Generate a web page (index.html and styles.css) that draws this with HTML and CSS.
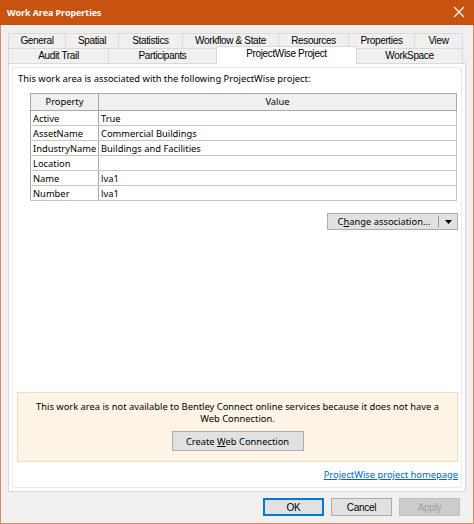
FILE: index.html
```html
<!DOCTYPE html>
<html>
<head>
<meta charset="utf-8">
<link rel="stylesheet" href="styles.css">
</head>
<body>
<div class="window">
  <div class="titlebar">
    <span class="title">Work Area Properties</span>
    <svg class="close" width="12" height="12" viewBox="0 0 12 12"><path d="M1 1L11 11M11 1L1 11" stroke="#fff" stroke-width="1.2" fill="none"/></svg>
  </div>
  <div class="body">
    <div class="tabs">
      <div class="tabrow row1">
        <div class="tab">General</div>
        <div class="tab">Spatial</div>
        <div class="tab">Statistics</div>
        <div class="tab">Workflow &amp; State</div>
        <div class="tab">Resources</div>
        <div class="tab">Properties</div>
        <div class="tab">View</div>
      </div>
      <div class="tabrow row2">
        <div class="tab">Audit Trail</div>
        <div class="tab">Participants</div>
        <div class="tab active">ProjectWise Project</div>
        <div class="tab">WorkSpace</div>
      </div>
    </div>
    <div class="panel">
      <div class="inner">
        <div class="intro">This work area is associated with the following ProjectWise project:</div>
        <table class="grid">
          <thead>
            <tr><th class="pcol">Property</th><th>Value</th></tr>
          </thead>
          <tbody>
            <tr><td>Active</td><td>True</td></tr>
            <tr><td>AssetName</td><td>Commercial Buildings</td></tr>
            <tr><td>IndustryName</td><td>Buildings and Facilities</td></tr>
            <tr><td>Location</td><td></td></tr>
            <tr><td>Name</td><td>lva1</td></tr>
            <tr><td>Number</td><td>lva1</td></tr>
          </tbody>
        </table>
        <div class="assoc-row">
          <div class="split">
            <span class="split-main">C<u>h</u>ange association...</span>
            <span class="split-sep"></span>
            <span class="split-arrow"><svg width="7" height="4" viewBox="0 0 7 4"><path d="M0 0H7L3.5 4Z" fill="#000"/></svg></span>
          </div>
        </div>
        <div class="spacer"></div>
        <div class="notice">
          <div class="notice-text">This work area is not available to Bentley Connect online services because it does not have a Web Connection.</div>
          <div class="btn create"><span>Create <u>W</u>eb Connection</span></div>
        </div>
        <div class="link-row"><span class="link">ProjectWise project homepage</span></div>
      </div>
    </div>
    <div class="footer">
      <div class="btn dlg default">OK</div>
      <div class="btn dlg">Cancel</div>
      <div class="btn dlg disabled">Apply</div>
    </div>
  </div>
</div>
</body>
</html>
```
FILE: styles.css
```css
* { box-sizing: border-box; }
html, body { margin: 0; padding: 0; }
body {
  width: 474px;
  height: 524px;
  overflow: hidden;
  font-family: "Noto Sans", "Open Sans", sans-serif;
  font-size: 9.35px;
  color: #000;
  background: #f0f0f0;
}
.window {
  width: 474px;
  height: 524px;
  display: flex;
  flex-direction: column;
  border-left: 1px solid #d98a5c;
  border-right: 1px solid #d98a5c;
  border-bottom: 1px solid #d98a5c;
}
.titlebar {
  height: 25px;
  background: #c8520f;
  display: flex;
  align-items: center;
  justify-content: space-between;
  padding: 0 9px 1px 7px;
  margin: 0 -1px;
}
.title {
  color: #fff;
  font-weight: bold;
  font-size: 8.9px;
}
.close { display: block; }
.body {
  flex: 1;
  display: flex;
  flex-direction: column;
  padding: 8px 7px 0 7px;
}
.tabs { display: flex; flex-direction: column; }
.tabrow { display: flex; height: 15px; }
.tab {
  border: 1px solid #d9d9d9;
  border-bottom: none;
  border-right: none;
  background: #f0f0f0;
  text-align: center;
  line-height: 14px;
  font-family: "Liberation Sans", Arial, sans-serif;
  font-size: 10px;
  letter-spacing: -0.35px;
  color: #000;
  white-space: nowrap;
}
.tab:last-child { border-right: 1px solid #d9d9d9; }
.row1 .tab:nth-child(1) { width: 57px; }
.row1 .tab:nth-child(2) { width: 53px; }
.row1 .tab:nth-child(3) { width: 64px; }
.row1 .tab:nth-child(4) { width: 96px; }
.row1 .tab:nth-child(5) { width: 70px; }
.row1 .tab:nth-child(6) { width: 66px; }
.row1 .tab:nth-child(7) { width: 49px; }
.row2 .tab:nth-child(1) { width: 100px; }
.row2 .tab:nth-child(2) { width: 108px; }
.row2 .tab:nth-child(3) { width: 141px; }
.row2 .tab:nth-child(4) { width: 106px; }
.row2 .tab.active {
  background: #fff;
  margin-top: -2px;
  height: 18px;
  position: relative;
  z-index: 1;
  line-height: 14px;
  border-right: 1px solid #d9d9d9;
}
.row2 .tab.active + .tab { border-left: none; }
.panel {
  width: 458px;
  height: 429px;
  background: #fff;
  border: 1px solid #d9d9d9;
  padding: 3px;
}
.inner {
  height: 100%;
  border: 1px solid #ececec;
  display: flex;
  flex-direction: column;
  padding: 3px 3px 0 4px;
}
.intro {
  padding-left: 1px;
  height: 16px;
  line-height: 16px;
}
.grid {
  margin: 6px 0 0 13px;
  width: 427px;
  border-collapse: collapse;
  border: 1px solid #a9a9a9;
}
.grid th {
  background: #f0f0f0;
  font-weight: normal;
  height: 17px;
  padding: 0;
  border: 1px solid #a9a9a9;
  text-align: center;
  line-height: 14px;
}
.grid th.pcol { width: 68px; }
.grid td {
  height: 15px;
  padding: 0 0 0 2px;
  border: 1px solid #c4c4c4;
  border-top: none;
  line-height: 13px;
  white-space: nowrap;
}
.grid td:first-child { border-right: 1px solid #a9a9a9; border-left-color: #a9a9a9; }
.assoc-row {
  display: flex;
  justify-content: flex-end;
  margin-top: 12px;
}
.split {
  display: flex;
  align-items: center;
  width: 131px;
  height: 17px;
  background: #e1e1e1;
  border: 1px solid #adadad;
}
.split-main {
  flex: 1;
  text-align: center;
  padding-left: 2px;
}
.split-sep {
  width: 1px;
  height: 11px;
  background: #9a9a9a;
}
.split-arrow {
  width: 18px;
  display: flex;
  justify-content: center;
  align-items: center;
}
.split-arrow svg { display: block; }
.spacer { flex: 1; }
.notice {
  background: #fdf4e5;
  border: 1px solid #ecdcc0;
  height: 70px;
  display: flex;
  flex-direction: column;
  align-items: center;
  padding: 8px 8px 0;
}
.notice-text {
  text-align: center;
  line-height: 12px;
}
.btn {
  display: flex;
  align-items: center;
  justify-content: center;
  background: #e1e1e1;
  border: 1px solid #adadad;
  color: #000;
}
.create {
  width: 132px;
  height: 20px;
  margin-top: 6px;
}
.link-row {
  display: flex;
  justify-content: flex-end;
  height: 25px;
  align-items: center;
}
.link {
  color: #0066cc;
  text-decoration: underline;
}
.footer {
  display: flex;
  justify-content: flex-end;
  gap: 7px;
  padding: 6px 6px 0 0;
}
.dlg {
  width: 61px;
  height: 18px;
  font-family: "Liberation Sans", Arial, sans-serif;
  font-size: 10px;
  letter-spacing: -0.3px;
}
.dlg.default { border: 1px solid #0078d7; box-shadow: inset 0 0 0 1px #0078d7; }
.dlg.disabled { background: #cccccc; border-color: #bfbfbf; color: #a0a0a0; }
```
